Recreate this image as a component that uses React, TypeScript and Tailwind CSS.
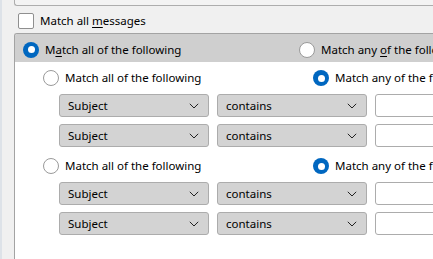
import React from "react";

const font = { fontFamily: '"Noto Sans", "Open Sans", sans-serif' };

function Radio({ checked }: { checked?: boolean }) {
  return checked ? (
    <span className="flex h-[16px] w-[16px] shrink-0 items-center justify-center rounded-full bg-[#0067c0]">
      <span className="h-[7px] w-[7px] rounded-full bg-white" />
    </span>
  ) : (
    <span className="h-[16px] w-[16px] shrink-0 rounded-full border border-[#9a9a9a] bg-white" />
  );
}

function Chevron() {
  return (
    <svg width="10" height="6" viewBox="0 0 10 6" className="shrink-0">
      <path d="M0.8 0.8 L5 5 L9.2 0.8" fill="none" stroke="#222" strokeWidth="1" />
    </svg>
  );
}

function Select({ label }: { label: string }) {
  return (
    <div className="flex h-[23px] w-[150px] shrink-0 items-center justify-between rounded-[3px] border border-[#acacac] bg-[#d3d3d3] pl-[8px] pr-[9px] text-[11.5px] text-black">
      <span>{label}</span>
      <Chevron />
    </div>
  );
}

function Row() {
  return (
    <div className="flex gap-[8px]">
      <Select label="Subject" />
      <Select label="contains" />
      <div className="h-[23px] w-[100px] shrink-0 rounded-[3px] border border-[#acacac] bg-white" />
    </div>
  );
}

function SubGroup({ className }: { className?: string }) {
  return (
    <div className={"flex flex-col " + (className ?? "")}>
      <div className="flex h-[16px] items-center pl-[28px]">
        <div className="flex w-[270px] shrink-0 items-center gap-[6px]">
          <Radio />
          <span className="text-[11.5px] leading-none">Match all of the following</span>
        </div>
        <div className="flex shrink-0 items-center gap-[6px] whitespace-nowrap">
          <Radio checked />
          <span className="text-[11.5px] leading-none">Match any of the following</span>
        </div>
      </div>
      <div className="mt-[8px] flex flex-col gap-[7px] pl-[44px]">
        <Row />
        <Row />
      </div>
    </div>
  );
}

export default function App() {
  return (
    <div
      className="flex h-[259px] w-[433px] overflow-hidden bg-[#f0f0f0] text-black"
      style={font}
    >
      <div className="flex w-[14px] shrink-0">
        <div className="w-[2px] bg-[#dde2e8]" />
      </div>
      <div className="flex min-w-0 flex-1 flex-col">
        <div className="h-[6px] shrink-0 rounded-bl-[3px] border-b border-l border-[#adadad] bg-[#f3f3f3]" />
        <div className="flex h-[27px] shrink-0 items-start pl-[4px] pt-[7px]">
          <span className="h-[16px] w-[16px] shrink-0 rounded-[2px] border border-[#8f8f8f] bg-white" />
          <span className="ml-[6px] text-[11.5px] leading-[16px]">
            Match all <span className="underline underline-offset-2">m</span>essages
          </span>
        </div>
        <div className="flex flex-1 flex-col overflow-hidden rounded-tl-[3px] border-l border-t border-[#a3a3a3]">
          <div className="flex h-[28px] shrink-0 items-center bg-[#cfcfcf] pl-[8px] pt-[3px]">
            <div className="flex w-[276px] shrink-0 items-center gap-[6px]">
              <Radio checked />
              <span className="text-[11.5px] leading-none">
                M<span className="underline underline-offset-2">a</span>tch all of the following
              </span>
            </div>
            <div className="flex shrink-0 items-center gap-[6px] whitespace-nowrap">
              <Radio />
              <span className="text-[11.5px] leading-none">
                Match any <span className="underline underline-offset-2">o</span>f the following
              </span>
            </div>
          </div>
          <div className="flex flex-1 flex-col bg-white pt-[8px]">
            <SubGroup />
            <SubGroup className="mt-[11px]" />
          </div>
        </div>
      </div>
    </div>
  );
}
